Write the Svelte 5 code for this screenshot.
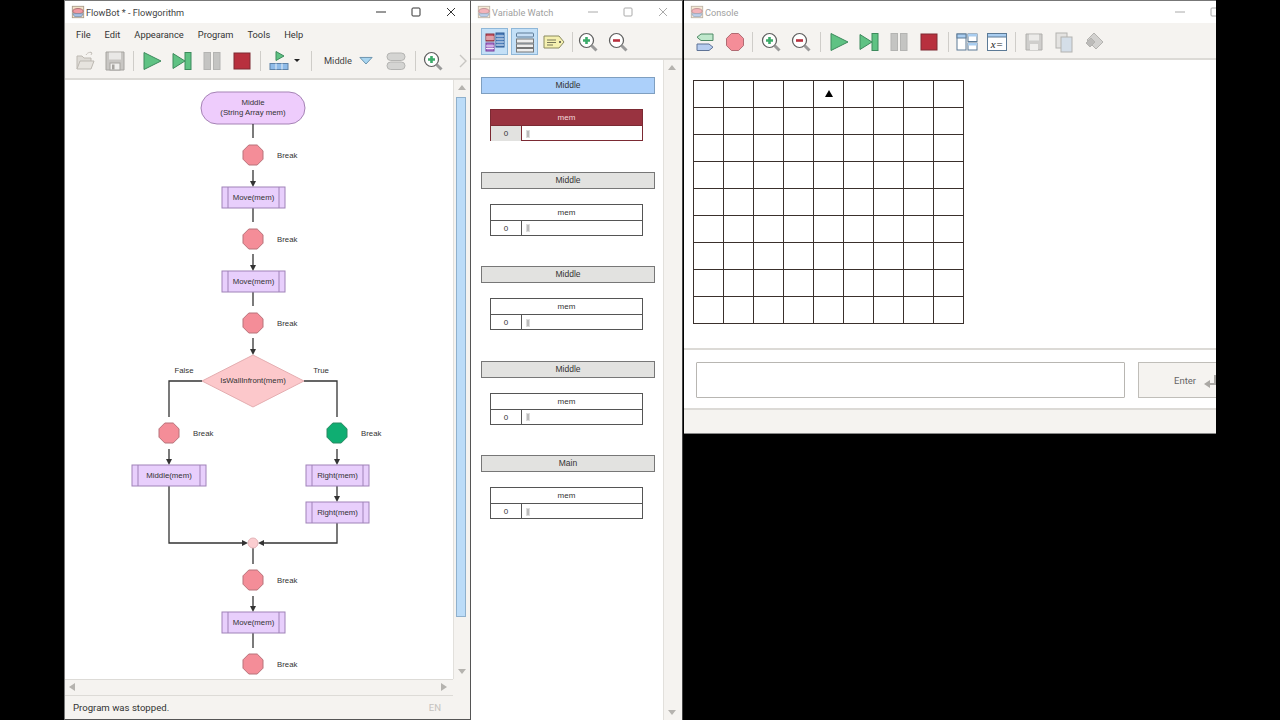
<script lang="ts">
  const menus = ['File', 'Edit', 'Appearance', 'Program', 'Tools', 'Help'];
  const panels = [
    { name: 'Middle', active: true },
    { name: 'Middle', active: false },
    { name: 'Middle', active: false },
    { name: 'Middle', active: false },
    { name: 'Main', active: false }
  ];
  const cells = Array.from({ length: 81 }, (_, i) => i);

  const breaks = [
    { x: 253, y: 155 },
    { x: 253, y: 239 },
    { x: 253, y: 323 },
    { x: 169, y: 433 },
    { x: 337, y: 433, hit: true },
    { x: 253, y: 580 },
    { x: 253, y: 664 }
  ];
  const calls = [
    { x: 222, y: 187, w: 63, label: 'Move(mem)' },
    { x: 222, y: 271, w: 63, label: 'Move(mem)' },
    { x: 132, y: 465, w: 74, label: 'Middle(mem)' },
    { x: 306, y: 465, w: 63, label: 'Right(mem)' },
    { x: 306, y: 502, w: 63, label: 'Right(mem)' },
    { x: 222, y: 612, w: 63, label: 'Move(mem)' }
  ];
  const lines = [
    'M253 124V138', 'M253 170V185', 'M253 208V222', 'M253 254V269', 'M253 292V306', 'M253 338V353',
    'M202 381H169V417', 'M304 381H337V417', 'M169 449V463', 'M337 449V463', 'M337 486V500',
    'M169 486V543H246', 'M337 523V543H260', 'M253 548V564', 'M253 596V610', 'M253 633V648'
  ];
  const arrowsDown = [[253, 187], [253, 271], [253, 355], [169, 465], [337, 465], [337, 502], [253, 612]];

  function octagon(cx: number, cy: number, r = 10) {
    const k = r * 0.42;
    return [[-k, -r], [k, -r], [r, -k], [r, k], [k, r], [-k, r], [-r, k], [-r, -k]]
      .map(([a, b]) => `${cx + a},${cy + b}`)
      .join(' ');
  }
</script>

{#snippet appIcon()}
  <svg class="app-icon" viewBox="0 0 16 16" width="14" height="14">
    <rect x="1.5" y="1.5" width="13" height="13" fill="#f3e2c8" stroke="#a89a88" />
    <ellipse cx="8" cy="7" rx="6" ry="3" fill="#ef9aa2" stroke="#a8686e" />
    <path d="M2 10h12l-2 3H4z" fill="#a9c6ee" stroke="#7d8fa8" />
  </svg>
{/snippet}

{#snippet caption(title, inactive)}
  <div class="caption" class:inactive>
    {@render appIcon()}
    <span class="caption-text">{title}</span>
    <div class="caption-btns">
      <svg viewBox="0 0 10 10" width="10" height="10"><path d="M0 5h10" /></svg>
      <svg viewBox="0 0 10 10" width="10" height="10"><rect x="1" y="1" width="8" height="8" rx="1" /></svg>
      <svg viewBox="0 0 10 10" width="10" height="10"><path d="M1 1l8 8M9 1l-8 8" /></svg>
    </div>
  </div>
{/snippet}

{#snippet icon(name)}
  <svg viewBox="0 0 24 24" width="24" height="24">
    {#if name === 'open'}
      <path d="M4 20V7h5l2 2h7v3" fill="#dedbd6" stroke="#bdb9b2" />
      <path d="M4 20l3-8h14l-3 8z" fill="#e6e3de" stroke="#bdb9b2" />
      <path d="M13 6c2-3 4-3 6-2m0 0l-2-1m2 1l-1 2" fill="none" stroke="#c6c2bc" />
    {:else if name === 'save'}
      <path d="M3 3h18v18H3z" fill="#c8c6c3" stroke="#a6a4a0" />
      <rect x="6" y="3.5" width="12" height="7" fill="#e9e8e6" />
      <rect x="7" y="14" width="10" height="7" fill="#f0efed" stroke="#a6a4a0" />
      <rect x="9" y="15.5" width="2.5" height="5" fill="#a6a4a0" />
    {:else if name === 'play'}
      <path d="M4 3.5L21 12 4 20.5z" fill="#5fc283" stroke="#3d8a5c" />
    {:else if name === 'step'}
      <path d="M3 4.5L15 12 3 19.5z" fill="#5fc283" stroke="#3d8a5c" />
      <rect x="15" y="3.5" width="6" height="17" fill="#5fc283" stroke="#3d8a5c" />
    {:else if name === 'pause'}
      <rect x="4" y="3.5" width="6.5" height="17" fill="#c4c4c2" stroke="#b4b4b2" />
      <rect x="13.5" y="3.5" width="6.5" height="17" fill="#c4c4c2" stroke="#b4b4b2" />
    {:else if name === 'stop'}
      <rect x="4" y="4" width="16" height="16" fill="#b8303e" stroke="#7f2a32" />
    {:else if name === 'layout'}
      <path d="M9 2.5L17 7 9 11.5z" fill="#5fc283" stroke="#3d8a5c" />
      <rect x="3" y="14.5" width="18" height="6" fill="#8fbbe8" stroke="#5f83a8" />
      <path d="M9 14.5v6M15 14.5v6" stroke="#e8f0f8" />
    {:else if name === 'stack'}
      <rect x="3" y="4" width="18" height="7.5" rx="3.7" fill="#d4d4d2" stroke="#b4b4b2" />
      <rect x="3" y="13" width="18" height="7.5" rx="3.7" fill="#d4d4d2" stroke="#b4b4b2" />
    {:else if name === 'zoomin' || name === 'zoomout'}
      <circle cx="10.5" cy="10.5" r="7" fill="#fff" stroke="#5c5c5c" stroke-width="1.2" />
      <path d="M15.5 15.5l5 5" stroke="#9a9a9a" stroke-width="3" />
      {#if name === 'zoomin'}
        <path d="M10.5 7v7M7 10.5h7" stroke="#3cab6a" stroke-width="2.6" />
      {:else}
        <path d="M7 10.5h7" stroke="#b8303e" stroke-width="2.6" />
      {/if}
    {:else if name === 'vars'}
      <rect x="3" y="4" width="8" height="7" fill="#c95a68" stroke="#8a2f3a" />
      <path d="M3 7h8M3 9h8" stroke="#f5e6e8" />
      <rect x="3" y="13" width="8" height="8" fill="#b07fd0" stroke="#7a3f9a" />
      <path d="M3 16h8M3 18.5h8" stroke="#f2e8f8" />
      <rect x="13" y="3" width="8" height="14" fill="#4f80bc" stroke="#2c5a94" />
      <path d="M13 6h8M13 9h8M13 12h8M13 15h8" stroke="#e6eef8" />
    {:else if name === 'rows'}
      <rect x="3.5" y="3" width="17" height="4" rx="1" fill="#c6def5" stroke="#5c7a96" />
      <rect x="3.5" y="9" width="17" height="4" fill="#eee" stroke="#777" />
      <rect x="3.5" y="14" width="17" height="3.5" fill="#eee" stroke="#777" />
      <rect x="3.5" y="18.5" width="17" height="3.5" fill="#eee" stroke="#777" />
    {:else if name === 'tag'}
      <path d="M2 6h15l5 6-5 6H2z" fill="#f5f0b0" stroke="#8a8a60" />
      <path d="M5 10h9M5 12.5h9M5 15h6" stroke="#77775a" />
      <circle cx="18" cy="12" r="1" fill="#444" />
    {:else if name === 'shapes'}
      <path d="M8 4h12v6.5H8L4 7.2z" fill="#bfe8cc" stroke="#4f8a66" />
      <path d="M4 14h12l4 3.2-4 3.3H4z" fill="#b7cdf0" stroke="#5f7396" />
    {:else if name === 'breakpoint'}
      <polygon points={octagon(12, 12, 8.5)} fill="#f48d98" stroke="#b06a72" />
    {:else if name === 'panes'}
      <rect x="2" y="4" width="9" height="16" fill="#fff" stroke="#5c7a96" />
      <rect x="2" y="4" width="9" height="4" fill="#a9cdf0" stroke="#5c7a96" />
      <rect x="13" y="4" width="9" height="7.5" fill="#fff" stroke="#5c7a96" />
      <rect x="13" y="4" width="9" height="2.5" fill="#a9cdf0" />
      <rect x="13" y="13" width="9" height="7" fill="#fff" stroke="#5c7a96" />
      <rect x="13" y="13" width="9" height="2.5" fill="#a9cdf0" />
    {:else if name === 'formula'}
      <rect x="2.5" y="3.5" width="19" height="17" fill="#fff" stroke="#5c7a96" />
      <rect x="2.5" y="3.5" width="19" height="3.5" fill="#a9cdf0" stroke="#5c7a96" />
      <text x="12" y="18" class="formula-text">x=</text>
    {:else if name === 'savegray'}
      <path d="M4 4h16v16H4z" fill="#cfcecc" stroke="#b0afac" />
      <rect x="7" y="4.5" width="10" height="6" fill="#ecebe9" />
      <rect x="8" y="14" width="8" height="6" fill="#efeeec" />
    {:else if name === 'copygray'}
      <rect x="4" y="3" width="11" height="15" fill="#e4e3e1" stroke="#b4b3b0" />
      <rect x="9" y="7" width="11" height="15" fill="#d4dee8" stroke="#b4b3b0" />
    {:else if name === 'eraser'}
      <path d="M12 3l9 9-7 7-9-9z" fill="#d2d1cf" stroke="#b4b3b0" />
      <path d="M8 7l-5 5 4 4 5-5z" fill="#bcbbb9" stroke="#b4b3b0" transform="translate(1 1)" />
    {/if}
  </svg>
{/snippet}

<div class="desktop">
  <section class="window flow-window">
    {@render caption('FlowBot * - Flowgorithm', false)}
    <nav class="menu">
      {#each menus as item}
        <span>{item}</span>
      {/each}
    </nav>
    <div class="toolbar flow-tools">
      <span class="tool">{@render icon('open')}</span>
      <span class="tool">{@render icon('save')}</span>
      <i class="sep"></i>
      <span class="tool">{@render icon('play')}</span>
      <span class="tool">{@render icon('step')}</span>
      <span class="tool">{@render icon('pause')}</span>
      <span class="tool">{@render icon('stop')}</span>
      <i class="sep"></i>
      <span class="tool">{@render icon('layout')}</span>
      <span class="caret"></span>
      <i class="sep wide"></i>
      <span class="fn-name">Middle</span>
      <svg class="fn-arrow" viewBox="0 0 16 10" width="14" height="9">
        <path d="M1 1.5h14L8 9z" fill="#a9d5f0" stroke="#5f8aa6" />
      </svg>
      <span class="tool">{@render icon('stack')}</span>
      <i class="sep tight"></i>
      <span class="tool">{@render icon('zoomin')}</span>
      <svg class="more" viewBox="0 0 8 14" width="8" height="14"><path d="M1 1l6 6-6 6" /></svg>
    </div>

    <div class="canvas-row">
      <div class="canvas">
        <svg class="chart" viewBox="65 80 388 598" width="388" height="598">
          <rect x="201" y="92" width="104" height="32" rx="16" fill="#eeccfc" stroke="#a583b5" />
          <text x="253" y="105">Middle</text>
          <text x="253" y="115">(String Array mem)</text>

          {#each lines as d}
            <path class="edge" {d} />
          {/each}
          {#each arrowsDown as [x, y]}
            <path class="head" d="M{x - 3} {y - 6}h6l-3 6z" />
          {/each}
          <path class="head" d="M248 543l-6 -3v6z" />
          <path class="head" d="M258 543l6 -3v6z" />

          <polygon points="253,355 304,381 253,407 202,381" fill="#fcc8cb" stroke="#e4adb0" />
          <text x="253" y="383">IsWallInfront(mem)</text>
          <text x="184" y="372.5">False</text>
          <text x="321" y="372.5">True</text>

          {#each breaks as b}
            <polygon
              points={octagon(b.x, b.y)}
              fill={b.hit ? '#0fae72' : '#f48d98'}
              stroke={b.hit ? '#2a8a62' : '#b8737b'}
            />
            <text class="start" x={b.x + 24} y={b.y + 2.5}>Break</text>
          {/each}

          {#each calls as c}
            <rect x={c.x} y={c.y} width={c.w} height="21" fill="#e8cffc" stroke="#9f82b8" />
            <path class="inner" d="M{c.x + 6} {c.y}v21M{c.x + c.w - 6} {c.y}v21" />
            <text x={c.x + c.w / 2} y={c.y + 13}>{c.label}</text>
          {/each}

          <circle cx="253" cy="543" r="5" fill="#fbcdd0" stroke="#e4b4b8" />
        </svg>
      </div>
      <div class="vscroll">
        <span class="arrow up"></span>
        <span class="thumb"></span>
        <span class="arrow down"></span>
      </div>
    </div>
    <div class="hscroll">
      <span class="arrow left"></span>
      <span class="arrow right"></span>
    </div>
    <footer class="status">
      <span>Program was stopped.</span>
      <span class="lang">EN</span>
    </footer>
  </section>

  <section class="window watch-window">
    {@render caption('Variable Watch', true)}
    <div class="toolbar watch-tools">
      <span class="tool on">{@render icon('vars')}</span>
      <span class="tool on">{@render icon('rows')}</span>
      <span class="tool tag">{@render icon('tag')}</span>
      <i class="sep"></i>
      <span class="tool">{@render icon('zoomin')}</span>
      <span class="tool">{@render icon('zoomout')}</span>
    </div>
    <div class="watch-body">
      <div class="watch-list">
        {#each panels as panel}
          <div class="frame" class:active={panel.active}>
            <div class="frame-head">{panel.name}</div>
            <div class="var-card">
              <div class="var-name">mem</div>
              <div class="var-row">
                <span class="var-index">0</span>
                <span class="var-value"><i></i></span>
              </div>
            </div>
          </div>
        {/each}
      </div>
      <div class="vscroll">
        <span class="arrow up"></span>
        <span class="arrow down"></span>
      </div>
    </div>
  </section>

  <section class="window console-window">
    {@render caption('Console', true)}
    <div class="toolbar console-tools">
      <span class="tool">{@render icon('shapes')}</span>
      <span class="tool">{@render icon('breakpoint')}</span>
      <i class="sep less"></i>
      <span class="tool">{@render icon('zoomin')}</span>
      <span class="tool">{@render icon('zoomout')}</span>
      <i class="sep more-gap"></i>
      <span class="tool">{@render icon('play')}</span>
      <span class="tool">{@render icon('step')}</span>
      <span class="tool">{@render icon('pause')}</span>
      <span class="tool">{@render icon('stop')}</span>
      <i class="sep more-gap"></i>
      <span class="tool">{@render icon('panes')}</span>
      <span class="tool">{@render icon('formula')}</span>
      <i class="sep"></i>
      <span class="tool">{@render icon('savegray')}</span>
      <span class="tool">{@render icon('copygray')}</span>
      <span class="tool">{@render icon('eraser')}</span>
    </div>
    <div class="console-output">
      <div class="grid">
        {#each cells as cell}
          <div class="cell">
            {#if cell === 4}<span class="robot"></span>{/if}
          </div>
        {/each}
      </div>
    </div>
    <div class="console-input">
      <div class="input-box"></div>
      <div class="enter">
        <span>Enter</span>
        <svg viewBox="0 0 16 16" width="16" height="16"><path d="M10 0v8H6V5L0 9l6 4v-3h6V0z" fill="#aaa8a4" /></svg>
      </div>
    </div>
    <div class="console-foot"></div>
  </section>
</div>

<style>
  :global(body) {
    margin: 0;
    background: #000;
  }

  .desktop {
    position: relative;
    width: 1280px;
    height: 720px;
    overflow: hidden;
    background: #000;
    font-family: Roboto, "Liberation Sans", sans-serif;
    color: #333;
  }

  .window {
    position: absolute;
    top: 0;
    display: flex;
    flex-direction: column;
    box-sizing: border-box;
    background: #f5f3f0;
    border-top: 1px solid #777;
    overflow: hidden;
  }

  .flow-window {
    left: 64px;
    width: 407px;
    height: 720px;
    border-left: 1px solid #777;
    border-right: 1px solid #555;
    border-bottom: 1px solid #555;
  }

  .watch-window {
    left: 471px;
    width: 212px;
    height: 720px;
    border-right: 1px solid #444;
  }

  .console-window {
    left: 684px;
    width: 532px;
    height: 434px;
    border-bottom: 1px solid #888;
  }

  .caption {
    display: flex;
    align-items: center;
    height: 22px;
    flex: none;
    padding-left: 6px;
    background: #fff;
    font-size: 9.2px;
    color: #444;
  }

  .caption.inactive {
    color: #a0a0a0;
  }

  .app-icon {
    flex: none;
    margin-right: 1px;
  }

  .caption.inactive .app-icon {
    opacity: 0.75;
  }

  .caption-btns {
    display: flex;
    gap: 25px;
    margin-left: auto;
    padding-right: 14px;
  }

  .caption-btns svg {
    flex: none;
    fill: none;
    stroke: #333;
    stroke-width: 1;
  }

  .caption.inactive .caption-btns svg {
    stroke: #aaa;
  }

  .console-window .caption-btns {
    position: absolute;
    left: 491px;
    top: 6px;
    padding: 0;
  }

  .menu {
    display: flex;
    align-items: center;
    gap: 14px;
    height: 23px;
    flex: none;
    padding-left: 11px;
    font-size: 9.3px;
    color: #333;
  }

  .toolbar {
    display: flex;
    align-items: center;
    flex: none;
    box-sizing: border-box;
    border-bottom: 2px solid #dcdad6;
  }

  .flow-tools {
    height: 34px;
    padding: 0 0 3px 5px;
  }

  .watch-tools,
  .console-tools {
    height: 37px;
    padding: 2px 0 0 10px;
  }

  .console-tools {
    padding-left: 6px;
  }

  .tool {
    display: flex;
    align-items: center;
    justify-content: center;
    flex: none;
    box-sizing: border-box;
    width: 30px;
    height: 27px;
  }

  .tool.on {
    background: #c4e0f7;
    border: 1px solid #8fb7d8;
    width: 27px;
    margin-right: 3px;
  }

  .tool.tag {
    margin-left: -2px;
  }

  .sep {
    display: block;
    flex: none;
    width: 1px;
    height: 20px;
    margin: 0 3px;
    background: #cfcdc9;
  }

  .sep.wide {
    margin: 0 12px 0 11px;
  }

  .sep.tight {
    margin: 0 2px 0 4px;
  }

  .sep.less {
    margin: 0 3px 0 2px;
  }

  .sep.more-gap {
    margin: 0 3px 0 4px;
  }

  .watch-tools .sep {
    margin: 0 0 0 3px;
  }

  .caret {
    width: 0;
    height: 0;
    border: 3px solid transparent;
    border-top: 3px solid #222;
    border-bottom: 0;
  }

  .fn-name {
    flex: none;
    width: 27px;
    font-size: 9.3px;
    color: #444;
  }

  .fn-arrow {
    flex: none;
    margin: 0 8px;
  }

  .more {
    flex: none;
    margin-left: 11px;
    fill: none;
    stroke: #c8c6c2;
    stroke-width: 1.4;
  }

  .formula-text {
    font-family: "Liberation Serif", serif;
    font-style: italic;
    font-size: 11px;
    text-anchor: middle;
    fill: #222;
  }

  .canvas-row {
    display: flex;
    flex: none;
    height: 599px;
    background: #fff;
  }

  .canvas {
    width: 388px;
    flex: none;
    overflow: hidden;
    background: #fff;
  }

  .chart {
    display: block;
  }

  .chart text {
    font-family: "Liberation Sans", sans-serif;
    font-size: 7.8px;
    fill: #333;
    text-anchor: middle;
  }

  .chart text.start {
    text-anchor: start;
  }

  .edge {
    fill: none;
    stroke: #333;
    stroke-width: 1.3;
  }

  .head {
    fill: #333;
  }

  .inner {
    fill: none;
    stroke: #9f82b8;
  }

  .vscroll {
    position: relative;
    flex: 1;
    background: #f5f3f0;
    border-left: 1px solid #e2e0dc;
  }

  .arrow {
    position: absolute;
    width: 0;
    height: 0;
    border: 4px solid transparent;
  }

  .arrow.up {
    top: 5px;
    left: 4px;
    border-top: 0;
    border-bottom: 5px solid #b5b3af;
  }

  .arrow.down {
    bottom: 5px;
    left: 4px;
    border-bottom: 0;
    border-top: 5px solid #b5b3af;
  }

  .thumb {
    position: absolute;
    top: 17px;
    left: 2px;
    width: 10px;
    height: 520px;
    background: #bcdcf8;
    border: 1px solid #8fb0cc;
    box-sizing: border-box;
  }

  .hscroll {
    position: relative;
    flex: none;
    width: 388px;
    height: 17px;
    box-sizing: border-box;
    border-top: 1px solid #dddbd7;
    border-bottom: 1px solid #dddbd7;
  }

  .arrow.left {
    left: 4px;
    top: 3px;
    border-left: 0;
    border-right: 6px solid #b5b3af;
  }

  .arrow.right {
    right: 6px;
    top: 3px;
    border-right: 0;
    border-left: 6px solid #b5b3af;
  }

  .status {
    display: flex;
    align-items: center;
    justify-content: space-between;
    flex: 1;
    padding: 0 29px 0 8px;
    font-size: 9.6px;
    color: #333;
  }

  .lang {
    color: #c4c2be;
  }

  .watch-body {
    display: flex;
    flex: 1;
    background: #fff;
  }

  .watch-list {
    display: flex;
    flex-direction: column;
    gap: 30.5px;
    box-sizing: border-box;
    width: 192px;
    padding: 17px 8px 0 10px;
    flex: none;
  }

  .frame-head {
    box-sizing: border-box;
    height: 17px;
    line-height: 15px;
    text-align: center;
    font-family: "Liberation Sans", sans-serif;
    font-size: 8.5px;
    background: #e2e2e0;
    border: 1px solid #777;
    color: #333;
  }

  .frame.active .frame-head {
    background: #acd0fa;
    border-color: #7f9fc0;
  }

  .var-card {
    box-sizing: border-box;
    width: 153px;
    height: 32px;
    margin: 15px 0 0 9px;
    border: 1px solid #555;
    background: #fff;
    font-family: "Liberation Sans", sans-serif;
    font-size: 8px;
  }

  .var-name {
    height: 15px;
    line-height: 15px;
    text-align: center;
    border-bottom: 1px solid #555;
    color: #333;
  }

  .active .var-card {
    border-color: #7b2a33;
  }

  .active .var-name {
    background: #993340;
    color: #f3d9dc;
    border-bottom-color: #7b2a33;
  }

  .var-row {
    display: flex;
    height: 15px;
    line-height: 15px;
  }

  .var-index {
    width: 31px;
    text-align: center;
    box-sizing: border-box;
    border-right: 1px solid #555;
  }

  .active .var-index {
    background: #e2e2e0;
    border-right-color: #7b2a33;
  }

  .var-value {
    display: flex;
    align-items: center;
    padding-left: 4px;
  }

  .var-value i {
    display: block;
    width: 2px;
    height: 6px;
    background: #bbb;
    border: 1px solid #ddd;
  }

  .console-tools .tool svg {
    display: block;
  }

  .console-output {
    flex: none;
    box-sizing: border-box;
    height: 290px;
    padding: 20px 0 0 9px;
    background: #fff;
    border-bottom: 2px solid #dcdad6;
  }

  .grid {
    display: grid;
    grid-template-columns: repeat(9, 30px);
    grid-template-rows: repeat(9, 27px);
    width: 271px;
    height: 244px;
    box-sizing: border-box;
    border-top: 1px solid #3a302c;
    border-left: 1px solid #3a302c;
  }

  .cell {
    position: relative;
    box-sizing: border-box;
    border-right: 1px solid #3a302c;
    border-bottom: 1px solid #3a302c;
    display: flex;
    align-items: center;
    justify-content: center;
  }

  .robot {
    width: 0;
    height: 0;
    margin-bottom: 2px;
    border: 4px solid transparent;
    border-top: 0;
    border-bottom: 7px solid #000;
  }

  .console-input {
    display: flex;
    flex: none;
    box-sizing: border-box;
    height: 60px;
    padding: 12px 0 0 12px;
    gap: 13px;
    background: #fff;
    border-bottom: 2px solid #dcdad6;
  }

  .input-box {
    flex: none;
    box-sizing: border-box;
    width: 429px;
    height: 36px;
    background: #fff;
    border: 1px solid #b8b6b2;
    border-radius: 1px;
  }

  .enter {
    display: flex;
    align-items: center;
    flex: none;
    box-sizing: border-box;
    width: 90px;
    height: 36px;
    padding-left: 35px;
    background: #f5f3f0;
    border: 1px solid #c0beb9;
    font-size: 9.5px;
    color: #666;
  }

  .enter svg {
    flex: none;
    margin: 6px 0 0 8px;
  }

  .console-foot {
    flex: 1;
    background: #f5f3f0;
  }
</style>
